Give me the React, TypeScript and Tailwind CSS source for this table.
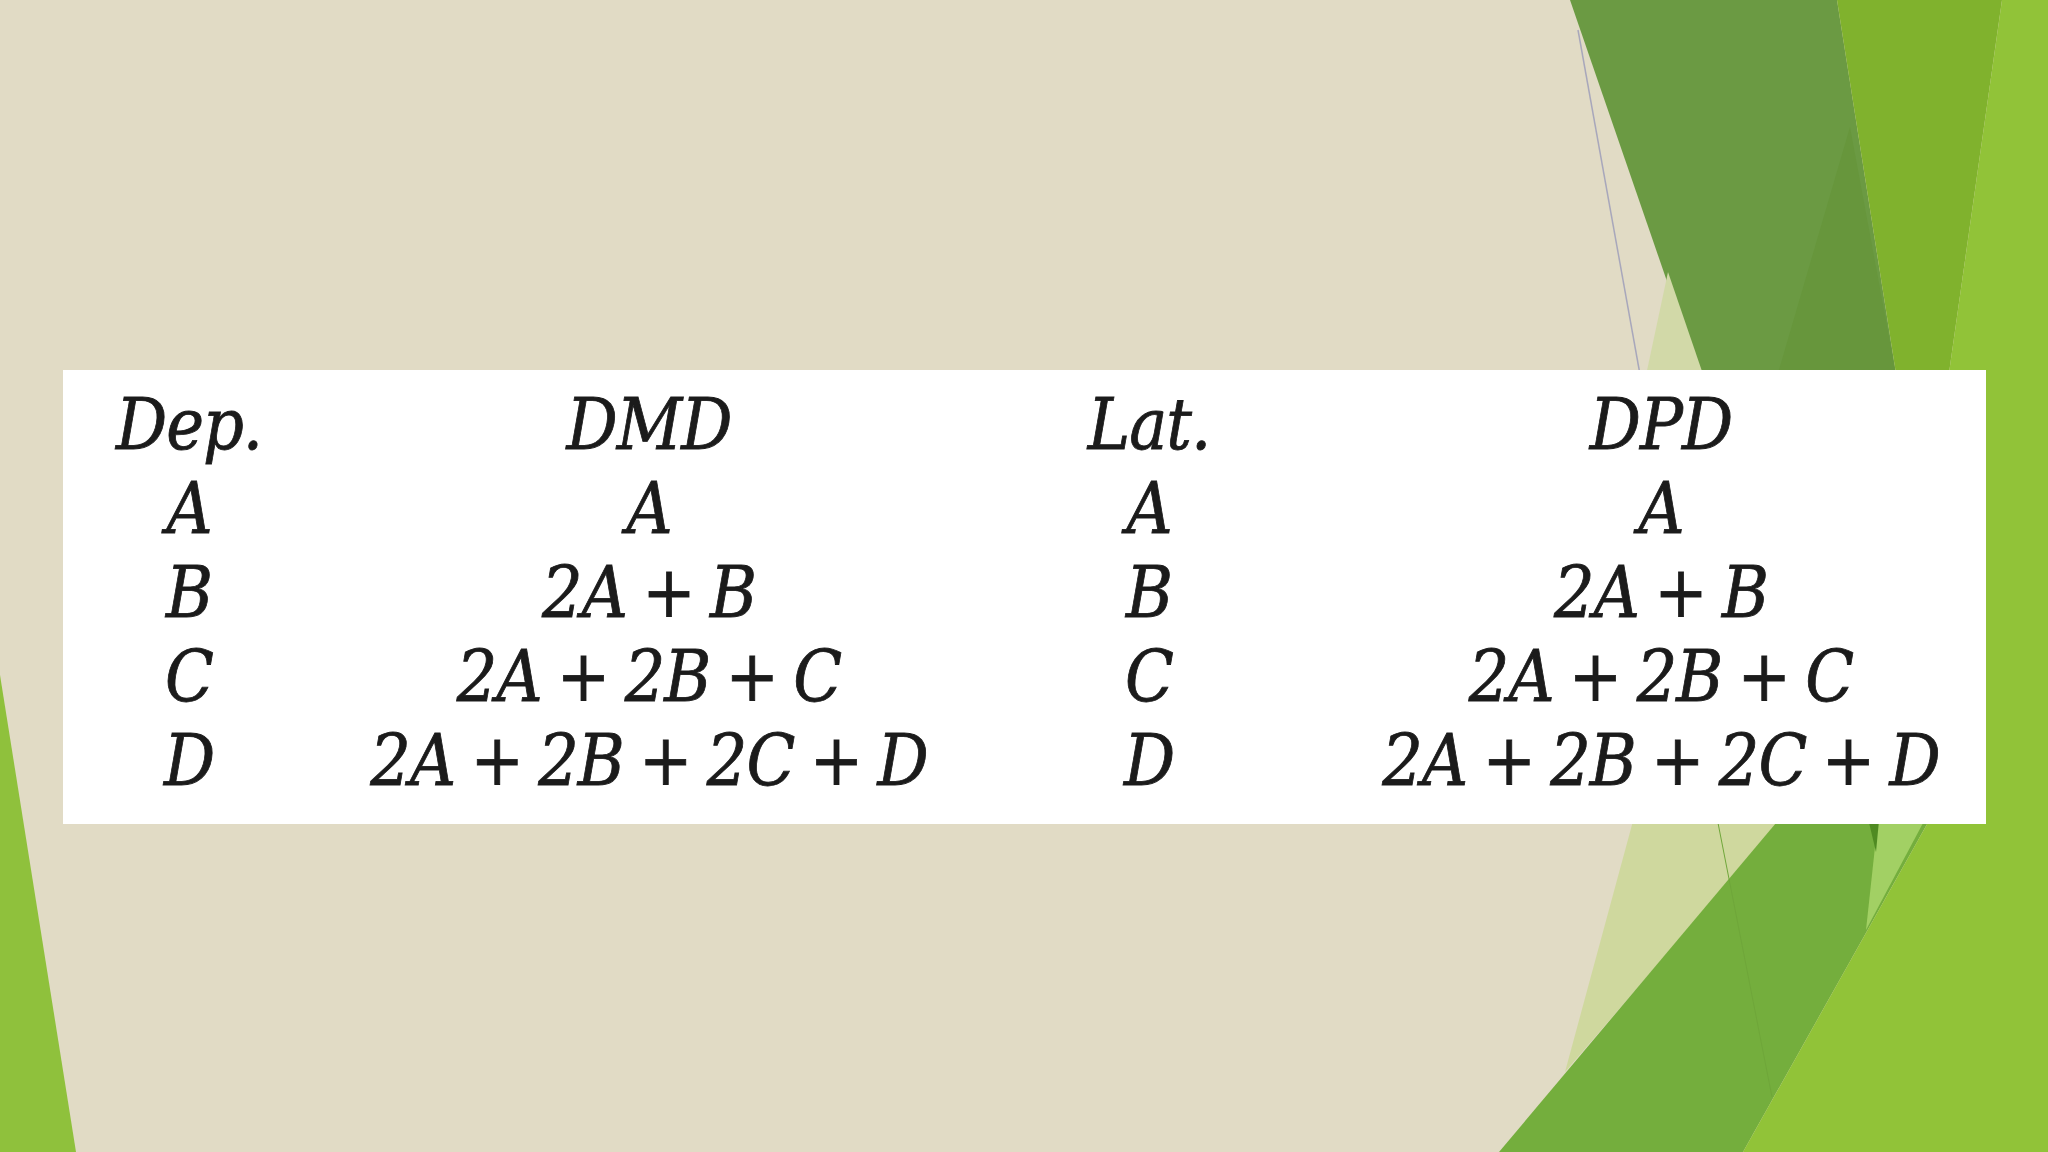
const rows = [
  ['Dep.', 'DMD', 'Lat.', 'DPD'],
  ['A', 'A', 'A', 'A'],
  ['B', '2A + B', 'B', '2A + B'],
  ['C', '2A + 2B + C', 'C', '2A + 2B + C'],
  ['D', '2A + 2B + 2C + D', 'D', '2A + 2B + 2C + D'],
];

function Backdrop() {
  return (
    <svg className="absolute inset-0" width="2048" height="1152" viewBox="0 0 2048 1152">
      {/* top right facets */}
      <polygon points="1570,0 1837,0 1897,380 1701,380" fill="#6b9a43" />
      <polygon points="1850,127 1897,380 1776,380" fill="#67963c" />
      <polygon points="1668,272 1705,380 1645,380" fill="#d2d9a8" />
      <line x1="1578" y1="30" x2="1641" y2="380" stroke="#a8a7bb" strokeWidth="1.5" />
      <polygon points="1837,0 2002,0 1948,380 1897,380" fill="#80b22d" />
      {/* bottom right facets */}
      <polygon points="1636,810 1790,810 1565,1072" fill="#cfd89e" />
      <polygon points="1787,810 1935,810 1743,1152 1499,1152" fill="#74ae3d" />
      <polygon points="1879,810 1930,810 1866,930" fill="#a2d064" />
      <polygon points="1866,810 1880,810 1876,852" fill="#4f8a22" />
      <line x1="1718" y1="823" x2="1772" y2="1097" stroke="#6fa63a" strokeWidth="1" />
      {/* right strip */}
      <polygon points="2002,0 2048,0 2048,1152 1743,1152 1935,810 1960,380 1948,380" fill="#91c338" />
      {/* left facet */}
      <polygon points="0,675 76,1152 0,1152" fill="#8fc13c" />
    </svg>
  );
}

export default function App() {
  return (
    <div className="relative w-[2048px] h-[1152px] overflow-hidden bg-[#e1dbc5]">
      <Backdrop />
      <div className="relative ml-[63px] mt-[370px] w-[1923px] h-[454px] bg-white pt-[12px]">
        {rows.map((row, i) => (
          <div
            key={i}
            className="grid grid-cols-[252px_668px_332px_670px] h-[84px] items-center text-[#1b1b1b] italic text-[71px] leading-none tracking-[-1px] [word-spacing:-4px] [-webkit-text-stroke:0.8px_#1b1b1b] font-['DejaVu_Serif_Condensed','DejaVu_Serif',serif]"
          >
            <div className="text-center">{row[0]}</div>
            <div className="text-center">{row[1]}</div>
            <div className="text-center">{row[2]}</div>
            <div className="text-center pl-[22px]">{row[3]}</div>
          </div>
        ))}
      </div>
    </div>
  );
}
